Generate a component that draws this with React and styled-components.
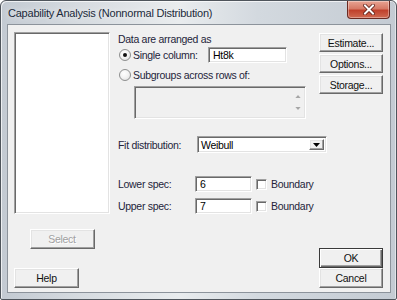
import React from "react";
import styled, { createGlobalStyle, css } from "styled-components";

const Global = createGlobalStyle`
  html, body { margin: 0; padding: 0; background: #fff; }
  body { font-family: "Liberation Sans", Arial, sans-serif; }
  * { box-sizing: border-box; }
`;

const Window = styled.div`
  width: 397px;
  height: 300px;
  border: 1px solid #4f555c;
  border-radius: 6px 6px 2px 2px;
  background: linear-gradient(90deg, #c3cad2 0%, #d6dbe0 20%, #e9ecee 45%, #d3d9df 65%, #c4cbd3 100%);
  padding: 0 5px 6px 6px;
  display: flex;
  flex-direction: column;
  box-shadow: inset 1px 1px 0 rgba(255,255,255,0.7), inset -1px 0 0 rgba(255,255,255,0.5);
`;

const TitleBar = styled.div`
  height: 23px;
  display: flex;
  align-items: flex-start;
  justify-content: space-between;
`;

const Title = styled.div`
  font-size: 11px;
  letter-spacing: -0.22px;
  color: #1b2a3a;
  padding-top: 6px;
  padding-left: 1px;
  text-shadow: 0 0 6px rgba(255,255,255,0.9);
`;

const CloseButton = styled.div`
  width: 43px;
  height: 18px;
  margin-right: 1px;
  border: 1px solid #6a2a22;
  border-top: none;
  border-radius: 0 0 4px 4px;
  background: linear-gradient(180deg, #e8a493 0%, #d67a66 45%, #c0412c 55%, #cf6a52 100%);
  box-shadow: inset 0 0 0 1px rgba(255,255,255,0.35);
  display: flex;
  align-items: center;
  justify-content: center;
`;

const Client = styled.div`
  flex: 1;
  border: 1px solid #8c939b;
  background: #f0f0f0;
  padding: 7px 6px 4px 6px;
  display: grid;
  grid-template-columns: 96px 193px 64px;
  column-gap: 8px;
  font-size: 10.5px;
  letter-spacing: -0.3px;
  color: #24243a;
`;

const Column = styled.div`
  display: flex;
  flex-direction: column;
  min-width: 0;
  align-items: ${(p) => p.$align || "stretch"};
`;

const sunken = css`
  border: 1px solid;
  border-color: #a0a0a0 #ffffff #ffffff #a0a0a0;
  box-shadow: inset 1px 1px 0 #696969, inset -1px -1px 0 #e3e3e3;
`;

const raised = css`
  border: 1px solid;
  border-color: #ffffff #696969 #696969 #ffffff;
  box-shadow: inset -1px -1px 0 #a0a0a0, inset 1px 1px 0 #e3e3e3;
`;

const ListBox = styled.div`
  ${sunken};
  background: #fff;
  height: 182px;
`;

const Button = styled.div`
  ${raised};
  width: ${(p) => p.$w || 64}px;
  height: ${(p) => p.$h || 19}px;
  margin-top: ${(p) => p.$mt || 0}px;
  background: #f0f0f0;
  display: flex;
  align-items: center;
  justify-content: center;
  color: ${(p) => (p.$disabled ? "#a0a0a0" : "#111")};
  text-shadow: ${(p) => (p.$disabled ? "1px 1px 0 #fff" : "none")};
  ${(p) =>
    p.$default &&
    css`
      border: 1px solid #3a3a3a;
      box-shadow: inset 1px 1px 0 #fff, inset -1px -1px 0 #696969, inset -2px -2px 0 #a0a0a0;
    `}
`;

const Spacer = styled.div`
  flex: 1;
`;

const TextLine = styled.div`
  height: 14px;
  line-height: 14px;
  margin-top: ${(p) => p.$mt || 0}px;
  white-space: nowrap;
`;

const Row = styled.div`
  display: flex;
  align-items: center;
  height: ${(p) => p.$h || 16}px;
  margin-top: ${(p) => p.$mt || 0}px;
  white-space: nowrap;
`;

const Label = styled.div`
  width: ${(p) => p.$w}px;
  flex: none;
`;

const Radio = styled.div`
  width: 12px;
  height: 12px;
  border-radius: 50%;
  flex: none;
  margin-left: 1px;
  margin-right: 2px;
  border: 1px solid #8e8f8f;
  background: radial-gradient(circle at 40% 35%, #ffffff 0%, #f2f2f2 50%, #d8d8d8 100%);
  display: flex;
  align-items: center;
  justify-content: center;
  &::after {
    content: "";
    display: ${(p) => (p.$checked ? "block" : "none")};
    width: 4px;
    height: 4px;
    border-radius: 50%;
    background: #111;
  }
`;

const Input = styled.div`
  ${sunken};
  background: #fff;
  width: ${(p) => p.$w}px;
  height: ${(p) => p.$h || 16}px;
  padding-left: 4px;
  display: flex;
  align-items: center;
  color: #000;
  flex: none;
`;

const DisabledBox = styled.div`
  ${sunken};
  background: #f0f0f0;
  width: 172px;
  height: 33px;
  margin-left: 16px;
  margin-top: 4px;
  display: flex;
  justify-content: flex-end;
`;

const ScrollCol = styled.div`
  width: 14px;
  display: flex;
  flex-direction: column;
  justify-content: space-around;
  align-items: center;
  padding: 3px 0;
`;

const Select = styled.div`
  ${sunken};
  background: #fff;
  width: 130px;
  height: 17px;
  display: flex;
  align-items: stretch;
  color: #000;
  flex: none;
  padding: 2px;
`;

const SelectText = styled.div`
  flex: 1;
  padding-left: 1px;
  display: flex;
  align-items: center;
`;

const SelectArrow = styled.div`
  ${raised};
  width: 15px;
  background: #f0f0f0;
  display: flex;
  align-items: center;
  justify-content: center;
`;

const Check = styled.div`
  ${sunken};
  width: 11px;
  height: 11px;
  background: #fff;
  flex: none;
  margin-left: 4px;
  margin-right: 4px;
`;

const Tri = ({ up, color = "#000", w = 7, h = 4 }) => (
  <svg width={w} height={h} viewBox="0 0 7 4">
    <polygon points={up ? "0,4 7,4 3.5,0" : "0,0 7,0 3.5,4"} fill={color} />
  </svg>
);

export default function App() {
  return (
    <>
      <Global />
      <Window>
        <TitleBar>
          <Title>Capability Analysis (Nonnormal Distribution)</Title>
          <CloseButton>
            <svg width="12" height="11" viewBox="0 0 12 11">
              <path d="M2 1.5 L10 9.5 M10 1.5 L2 9.5" stroke="#5a1a12" strokeWidth="3.6" strokeLinecap="square" />
              <path d="M2 1.5 L10 9.5 M10 1.5 L2 9.5" stroke="#ffffff" strokeWidth="2" strokeLinecap="square" />
            </svg>
          </CloseButton>
        </TitleBar>
        <Client>
          <Column>
            <ListBox />
            <Column $align="center">
              <Button $w={65} $h={20} $mt={15} $disabled>Select</Button>
            </Column>
            <Spacer />
            <Button $w={65} $h={20}>Help</Button>
          </Column>
          <Column>
            <TextLine>Data are arranged as</TextLine>
            <Row $mt={1}>
              <Radio $checked />
              <Label $w={75}>Single column:</Label>
              <Input $w={79}>Ht8k</Input>
            </Row>
            <Row $mt={5} $h={14}>
              <Radio />
              <Label>Subgroups across rows of:</Label>
            </Row>
            <DisabledBox>
              <ScrollCol>
                <Tri up color="#a6a6a6" w={6} h={3} />
                <Tri color="#a6a6a6" w={6} h={3} />
              </ScrollCol>
            </DisabledBox>
            <Row $mt={17} $h={17}>
              <Label $w={79}>Fit distribution:</Label>
              <Select>
                <SelectText>Weibull</SelectText>
                <SelectArrow>
                  <Tri />
                </SelectArrow>
              </Select>
            </Row>
            <Row $mt={23}>
              <Label $w={77}>Lower spec:</Label>
              <Input $w={57}>6</Input>
              <Check />
              <span>Boundary</span>
            </Row>
            <Row $mt={6}>
              <Label $w={77}>Upper spec:</Label>
              <Input $w={57}>7</Input>
              <Check />
              <span>Boundary</span>
            </Row>
          </Column>
          <Column>
            <Button $mt={1}>Estimate...</Button>
            <Button $mt={2}>Options...</Button>
            <Button $mt={2}>Storage...</Button>
            <Spacer />
            <Button $h={20} $default>OK</Button>
            <Button $h={20}>Cancel</Button>
          </Column>
        </Client>
      </Window>
    </>
  );
}
